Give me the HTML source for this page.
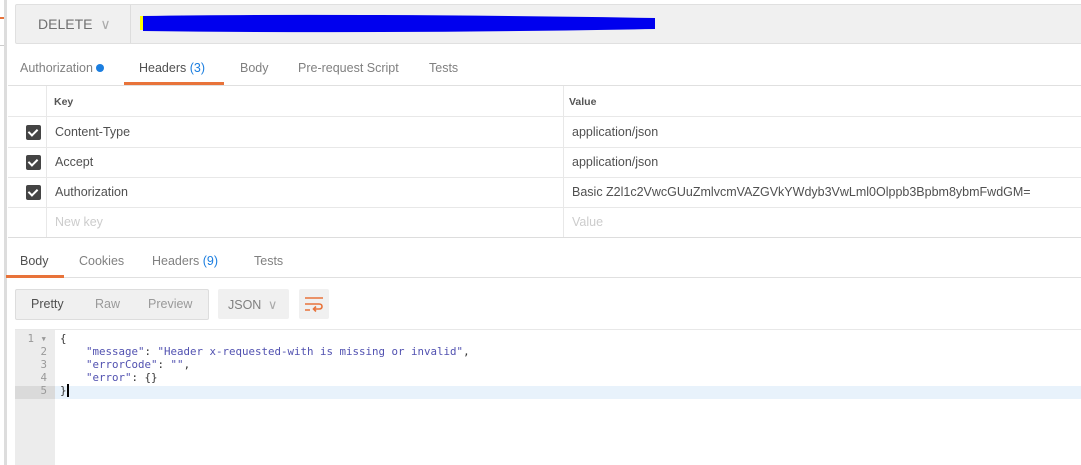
<!DOCTYPE html>
<html><head><style>
body{margin:0;width:1081px;height:465px;background:#fff;font-family:"Liberation Sans",sans-serif;position:relative;overflow:hidden;color:#505050}
.a{position:absolute}
.t{font-size:12.5px;color:#808080}
.mono{font-family:"DejaVu Sans Mono","Liberation Mono",monospace;font-size:10.8px}
.cb{position:absolute;left:26px;width:15px;height:15px;background:#444;border-radius:2px}
.cb:after{content:"";position:absolute;left:4px;top:2px;width:4px;height:7px;border:solid #fff;border-width:0 2px 2px 0;transform:rotate(45deg)}
.row{position:absolute;left:8px;right:0;height:30px;border-bottom:1px solid #e8e8e8;font-size:12.5px}
</style></head><body>
<div class="a" style="left:4px;top:0;width:3px;height:465px;background:#ddd"></div>
<div class="a" style="left:0;top:17px;width:4px;height:2px;background:#e8733a"></div>
<div class="a" style="left:0;top:45px;width:4px;height:1px;background:#ccc"></div>
<div class="a" style="left:15px;top:4px;width:1066px;height:38px;background:#f0f0f0;border:1px solid #e0e0e0;border-radius:2px"></div>
<div class="a" style="left:130px;top:5px;width:1px;height:38px;background:#ddd"></div>
<div class="a" style="left:38px;top:16px;font-size:14px;color:#707070">DELETE <span style="color:#aaa;font-size:14px;margin-left:4px">&#x2228;</span></div>
<svg class="a" style="left:140px;top:12px" width="520" height="22"><rect x="0" y="4" width="6" height="14" fill="#ff0"/><path d="M3 4 Q200 1 515 6 L515 17 Q250 22 3 19Z" fill="#0000ee"/></svg>
<div class="a" style="left:8px;top:46px;right:0;height:39px;border-bottom:1px solid #e0e0e0"></div>
<div class="a t" style="left:20px;top:61px">Authorization <span style="display:inline-block;width:8px;height:8px;border-radius:50%;background:#1b7ee0"></span></div>
<div class="a t" style="left:139px;top:61px;color:#505050">Headers <span style="color:#1b7ee0">(3)</span></div>
<div class="a" style="left:124px;top:82px;width:100px;height:3px;background:#e8733a"></div>
<div class="a t" style="left:240px;top:61px">Body</div>
<div class="a t" style="left:298px;top:61px">Pre-request Script</div>
<div class="a t" style="left:429px;top:61px">Tests</div>
<div class="row" style="top:86px;height:30px"><span class="a" style="left:46px;top:10px;font-size:10.5px;font-weight:bold;color:#555">Key</span><span class="a" style="left:561px;top:10px;font-size:10.5px;font-weight:bold;color:#555">Value</span></div>
<div class="a" style="left:46px;top:86px;width:1px;height:151px;background:#e8e8e8"></div>
<div class="a" style="left:563px;top:86px;width:1px;height:151px;background:#e8e8e8"></div>
<div class="row" style="top:117px"><span class="a" style="left:47px;top:8px">Content-Type</span><span class="a" style="left:564px;top:8px">application/json</span></div>
<div class="row" style="top:147px"><span class="a" style="left:47px;top:8px">Accept</span><span class="a" style="left:564px;top:8px">application/json</span></div>
<div class="row" style="top:177px"><span class="a" style="left:47px;top:8px">Authorization</span><span class="a" style="left:564px;top:8px">Basic Z2l1c2VwcGUuZmlvcmVAZGVkYWdyb3VwLml0Olppb3Bpbm8ybmFwdGM=</span></div>
<div class="row" style="top:207px;border-bottom:1px solid #ddd"><span class="a" style="left:47px;top:8px;color:#ccc">New key</span><span class="a" style="left:564px;top:8px;color:#ccc">Value</span></div>
<div class="cb" style="top:125px"></div><div class="cb" style="top:155px"></div><div class="cb" style="top:185px"></div>
<div class="a" style="left:8px;top:277px;right:0;height:1px;background:#e0e0e0"></div>
<div class="a t" style="left:20px;top:254px;color:#505050">Body</div>
<div class="a" style="left:6px;top:275px;width:58px;height:3px;background:#e8733a"></div>
<div class="a t" style="left:79px;top:254px">Cookies</div>
<div class="a t" style="left:152px;top:254px">Headers <span style="color:#1b7ee0">(9)</span></div>
<div class="a t" style="left:254px;top:254px">Tests</div>
<div class="a" style="left:15px;top:289px;width:192px;height:29px;background:#f0f0f0;border:1px solid #ddd;border-radius:2px"></div>
<div class="a t" style="left:31px;top:297px;color:#505050">Pretty</div>
<div class="a t" style="left:95px;top:297px;color:#999">Raw</div>
<div class="a t" style="left:148px;top:297px;color:#999">Preview</div>
<div class="a" style="left:218px;top:289px;width:71px;height:30px;background:#f0f0f0;border-radius:2px"></div>
<div class="a t" style="left:228px;top:297px">JSON <span style="color:#aaa;font-size:13px;margin-left:3px">&#x2228;</span></div>
<div class="a" style="left:299px;top:289px;width:30px;height:30px;background:#f0f0f0;border-radius:2px"></div>
<svg class="a" style="left:305px;top:296px" width="18" height="16" fill="none" stroke="#e8733a" stroke-width="1.6"><path d="M0 2H18M0 8H14Q17 8 17 10.5Q17 13 14 13H9M11 10.5L8.5 13L11 15.5M0 14H5"/></svg>
<div class="a" style="left:15px;top:329px;right:0;height:1px;background:#e8e8e8"></div>
<div class="a" style="left:15px;top:330px;width:40px;height:135px;background:#ececec"></div>
<div class="a" style="left:55px;top:386px;right:0;height:13px;background:#e8f2fb"></div>
<div class="a" style="left:15px;top:386px;width:40px;height:13px;background:#dadada"></div>
<div class="a mono" style="left:25px;top:332px;line-height:13px;color:#999;text-align:right;width:22px">1 ▾<br>2<br>3<br>4<br>5</div>
<div class="a mono" style="left:60px;top:332px;line-height:13px;color:#333;white-space:pre">{
    <span style="color:#5151b0">"message"</span>: <span style="color:#5151b0">"Header x-requested-with is missing or invalid"</span>,
    <span style="color:#5151b0">"errorCode"</span>: <span style="color:#5151b0">""</span>,
    <span style="color:#5151b0">"error"</span>: {}
}<span style="border-left:2px solid #000"></span></div>
</body></html>
